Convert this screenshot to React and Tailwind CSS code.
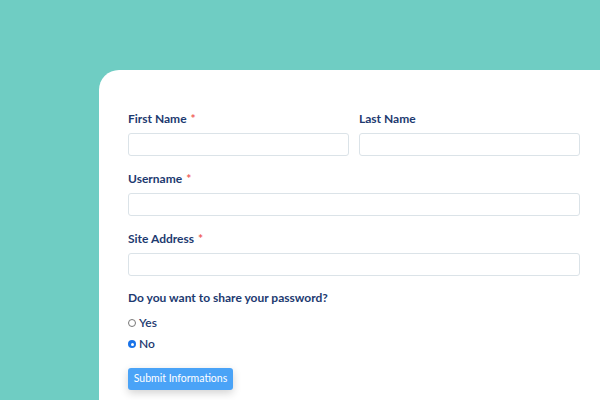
import React from "react";

const font = { fontFamily: "Lato, 'Nunito Sans', 'Open Sans', sans-serif" };

function Label({ children, req }) {
  return (
    <div className="h-[14px] flex items-center text-[12px] leading-[14px] font-bold text-[#1d3a70]">
      {children}
      {req && <span className="ml-[4px] text-[#f0605a]">*</span>}
    </div>
  );
}

function Input() {
  return <div className="h-[23px] w-full rounded-[3px] border border-[#dbe3e8] bg-white" />;
}

export default function App() {
  return (
    <div className="w-[600px] h-[400px] overflow-hidden bg-[#6fcdc3]" style={font}>
      <div className="ml-[99px] mt-[70px] h-[340px] rounded-tl-[20px] bg-white pl-[29px] pr-[20px] pt-[42px]">
        <div className="grid grid-cols-2 gap-x-[10px]">
          <div className="flex flex-col gap-[7px]">
            <Label req>First Name</Label>
            <Input />
          </div>
          <div className="flex flex-col gap-[7px]">
            <Label>Last Name</Label>
            <Input />
          </div>
        </div>
        <div className="mt-[16px] flex flex-col gap-[7px]">
          <Label req>Username</Label>
          <Input />
        </div>
        <div className="mt-[16px] flex flex-col gap-[7px]">
          <Label req>Site Address</Label>
          <Input />
        </div>
        <div className="mt-[15px]">
          <Label>Do you want to share your password?</Label>
        </div>
        <div className="mt-[11px] flex items-center h-[14px] text-[12px] font-semibold text-[#1d3a70]">
          <span className="w-[8px] h-[8px] rounded-full border border-[#777] bg-white mr-[3px]" />
          Yes
        </div>
        <div className="mt-[7px] flex items-center h-[14px] text-[12px] font-semibold text-[#1d3a70]">
          <span className="w-[8px] h-[8px] rounded-full bg-[#1a73e8] mr-[3px] flex items-center justify-center">
            <span className="w-[3px] h-[3px] rounded-full bg-white" />
          </span>
          No
        </div>
        <div className="mt-[17px]">
          <div className="w-[105px] h-[22px] rounded-[3px] bg-[#4aa3f7] text-white text-[10.5px] flex items-center justify-center shadow-[0_3px_8px_rgba(0,0,0,0.18)]">
            Submit Informations
          </div>
        </div>
      </div>
    </div>
  );
}
